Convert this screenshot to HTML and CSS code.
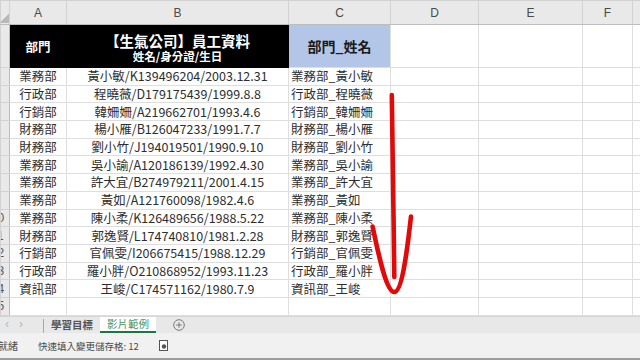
FILE: index.html
```html
<!DOCTYPE html>
<html>

<head>
    <meta charset="utf-8">
    <title>員工資料 - 快速填入</title>
    <link rel="stylesheet" href="styles.css">
</head>

<body>
    <div class="app">
        <div class="sheet">
            <table class="grid">
                <colgroup>
                    <col class="w-rh">
                    <col class="w-a">
                    <col class="w-b">
                    <col class="w-c">
                    <col class="w-d">
                    <col class="w-e">
                    <col class="w-f">
                    <col class="w-g">
                </colgroup>
                <thead>
                    <tr class="colhead">
                        <th class="corner"><span class="tri"></span></th>
                        <th>A</th>
                        <th>B</th>
                        <th>C</th>
                        <th>D</th>
                        <th>E</th>
                        <th>F</th>
                        <th></th>
                    </tr>
                </thead>
                <tbody>
                    <tr class="title">
                        <th class="rh"><span>1</span></th>
                        <td class="dark">部門</td>
                        <td class="dark stacked">
                            <div class="big">【生氣公司】員工資料</div>
                            <div class="small">姓名/身分證/生日</div>
                        </td>
                        <td class="blue">部門_姓名</td>
                        <td></td>
                        <td></td>
                        <td></td>
                        <td></td>
                    </tr>
                </tbody>
            </table>
            <svg class="arrow" width="640" height="317" viewBox="0 0 640 317">
                <path d="M391.8 95 C392.6 150, 393.6 215, 394.3 277" />
                <path d="M372.6 226.5 C378 252, 386 292, 394.3 292 C402 292, 407 252, 411 216.5" />
            </svg>
        </div>
        <div class="tabs">
            <span class="nav">‹</span>
            <span class="nav">›</span>
            <span class="sep"></span>
            <span class="tab">學習目標</span>
            <span class="tab active">影片範例</span>
            <svg class="add" width="12" height="12" viewBox="0 0 12 12">
                <circle cx="6" cy="6" r="5.3" />
                <path d="M6 3.2 V8.8 M3.2 6 H8.8" />
            </svg>
        </div>
        <div class="status">
            <span class="ready">就緒</span>
            <span class="msg">快速填入變更儲存格: 12</span>
            <svg class="rec" width="9" height="11" viewBox="0 0 9 11">
                <rect x="0.5" y="0.5" width="8" height="10" />
                <circle cx="5" cy="6.5" r="2.2" />
            </svg>
        </div>
    </div>
    <script>
        const rows = [
            ['業務部', '黃小敏/K139496204/2003.12.31', '業務部_黃小敏'],
            ['行政部', '程曉薇/D179175439/1999.8.8', '行政部_程曉薇'],
            ['行銷部', '韓姍姍/A219662701/1993.4.6', '行銷部_韓姍姍'],
            ['財務部', '楊小雁/B126047233/1991.7.7', '財務部_楊小雁'],
            ['財務部', '劉小竹/J194019501/1990.9.10', '財務部_劉小竹'],
            ['業務部', '吳小諭/A120186139/1992.4.30', '業務部_吳小諭'],
            ['業務部', '許大宜/B274979211/2001.4.15', '業務部_許大宜'],
            ['業務部', '黃如/A121760098/1982.4.6', '業務部_黃如'],
            ['業務部', '陳小柔/K126489656/1988.5.22', '業務部_陳小柔'],
            ['財務部', '郭逸賢/L174740810/1981.2.28', '財務部_郭逸賢'],
            ['行銷部', '官佩雯/I206675415/1988.12.29', '行銷部_官佩雯'],
            ['行政部', '羅小胖/O210868952/1993.11.23', '行政部_羅小胖'],
            ['資訊部', '王峻/C174571162/1980.7.9', '資訊部_王峻'],
            ['', '', ''],
            ['', '', '']
        ]

        const tbody = document.querySelector('.grid tbody')

        rows.forEach((row, i) => {
            const tr = document.createElement('tr')
            tr.classList.add('data')

            const rh = document.createElement('th')
            rh.classList.add('rh')
            const num = document.createElement('span')
            num.textContent = i + 2
            rh.appendChild(num)
            tr.appendChild(rh)

            const cols = ['a', 'b', 'c', 'd', 'e', 'f', 'g']
            cols.forEach((col, j) => {
                const td = document.createElement('td')
                td.classList.add(col)
                td.textContent = row[j] || ''
                tr.appendChild(td)
            })

            tbody.appendChild(tr)
        })
    </script>
</body>

</html>
```

FILE: styles.css
```css
body {
    margin: 0;
    font-family: "Noto Sans CJK TC", "Noto Sans", sans-serif;
    color: #2e2e2e;
    background-color: #fff;
}

.app {
    display: flex;
    flex-direction: column;
    width: 640px;
    height: 360px;
    overflow: hidden;
}

.sheet {
    position: relative;
    flex: 1;
    overflow: hidden;
}

.grid {
    table-layout: fixed;
    border-collapse: collapse;
    width: 640px;
}

.w-rh { width: 9px; }
.w-a { width: 57px; }
.w-b { width: 222px; }
.w-c { width: 102px; }
.w-d { width: 88px; }
.w-e { width: 104px; }
.w-f { width: 50px; }
.w-g { width: 8px; }

.grid td,
.grid th {
    border: 1px solid #dedede;
    padding: 0;
    white-space: nowrap;
    overflow: hidden;
}

.colhead th {
    height: 23px;
    background-color: #e9e9e9;
    border-color: #d2d2d2;
    border-bottom-color: #bdbdbd;
    color: #4a4a4a;
    font-family: "Liberation Sans", sans-serif;
    font-weight: normal;
    font-size: 12px;
}

.corner .tri {
    display: block;
    width: 8px;
    height: 11px;
    margin: 9px 0 0 0;
    background: linear-gradient(135deg, transparent 50%, #b9b9b9 50%);
}

.grid .rh {
    background-color: #e9e9e9;
    border-color: #d2d2d2;
    border-right-color: #bdbdbd;
    color: #555;
    font-family: "Liberation Sans", sans-serif;
    font-weight: normal;
    font-size: 12px;
}

.rh span {
    display: block;
    width: 25px;
    margin-left: -16px;
    text-align: center;
}

.title td {
    height: 42px;
    text-align: center;
    font-weight: bold;
}

.title .dark {
    background-color: #000;
    border-color: #000;
    color: #fff;
    font-size: 12.5px;
}

.title .stacked {
    vertical-align: top;
}

.title .big {
    margin-top: 8px;
    font-size: 14.5px;
    line-height: 16px;
}

.title .small {
    margin-top: 1px;
    font-size: 11.5px;
    line-height: 12px;
}

.title .blue {
    background-color: #b4c6e7;
    color: #1a1a1a;
    font-size: 14px;
}

.data td,
.data th {
    height: 16.7px;
    font-size: 12.5px;
    line-height: 16px;
}

.data .a,
.data .b {
    text-align: center;
}

.data .c {
    padding-left: 2px;
}

.arrow {
    position: absolute;
    left: 0;
    top: 0;
}

.arrow path {
    fill: none;
    stroke: #e10a0a;
    stroke-width: 4.6;
    stroke-linecap: round;
    stroke-linejoin: round;
}

.tabs {
    display: flex;
    align-items: stretch;
    height: 16px;
    background-color: #e8e8e8;
    border-top: 1px solid #d6d6d6;
    font-size: 10.5px;
}

.nav {
    width: 14px;
    color: #b4b4b4;
    text-align: center;
    line-height: 15px;
    font-size: 12px;
    font-family: "Liberation Sans", sans-serif;
}

.sep {
    width: 1px;
    margin: 2px 0 0 15px;
    background-color: #a9a9a9;
}

.tab {
    padding: 0 7px;
    line-height: 16px;
    color: #555;
    font-weight: bold;
}

.tab.active {
    background-color: #fff;
    color: #4a9466;
    font-weight: normal;
    border-bottom: 2px solid #217346;
    line-height: 14px;
}

.add {
    align-self: center;
    margin-left: 17px;
}

.add circle {
    fill: none;
    stroke: #7a7a7a;
}

.add path {
    stroke: #7a7a7a;
    stroke-width: 1;
}

.status {
    display: flex;
    align-items: center;
    height: 25px;
    background-color: #f1f1f1;
    border-bottom: 2px solid #9c9c9c;
    font-size: 9.5px;
    color: #4a4a4a;
}

.ready {
    margin-left: -2px;
    font-size: 10px;
}

.msg {
    margin-left: 20px;
}

.rec {
    margin-left: 20px;
}

.rec rect {
    fill: #fff;
    stroke: #555;
}

.rec circle {
    fill: #555;
}
```
